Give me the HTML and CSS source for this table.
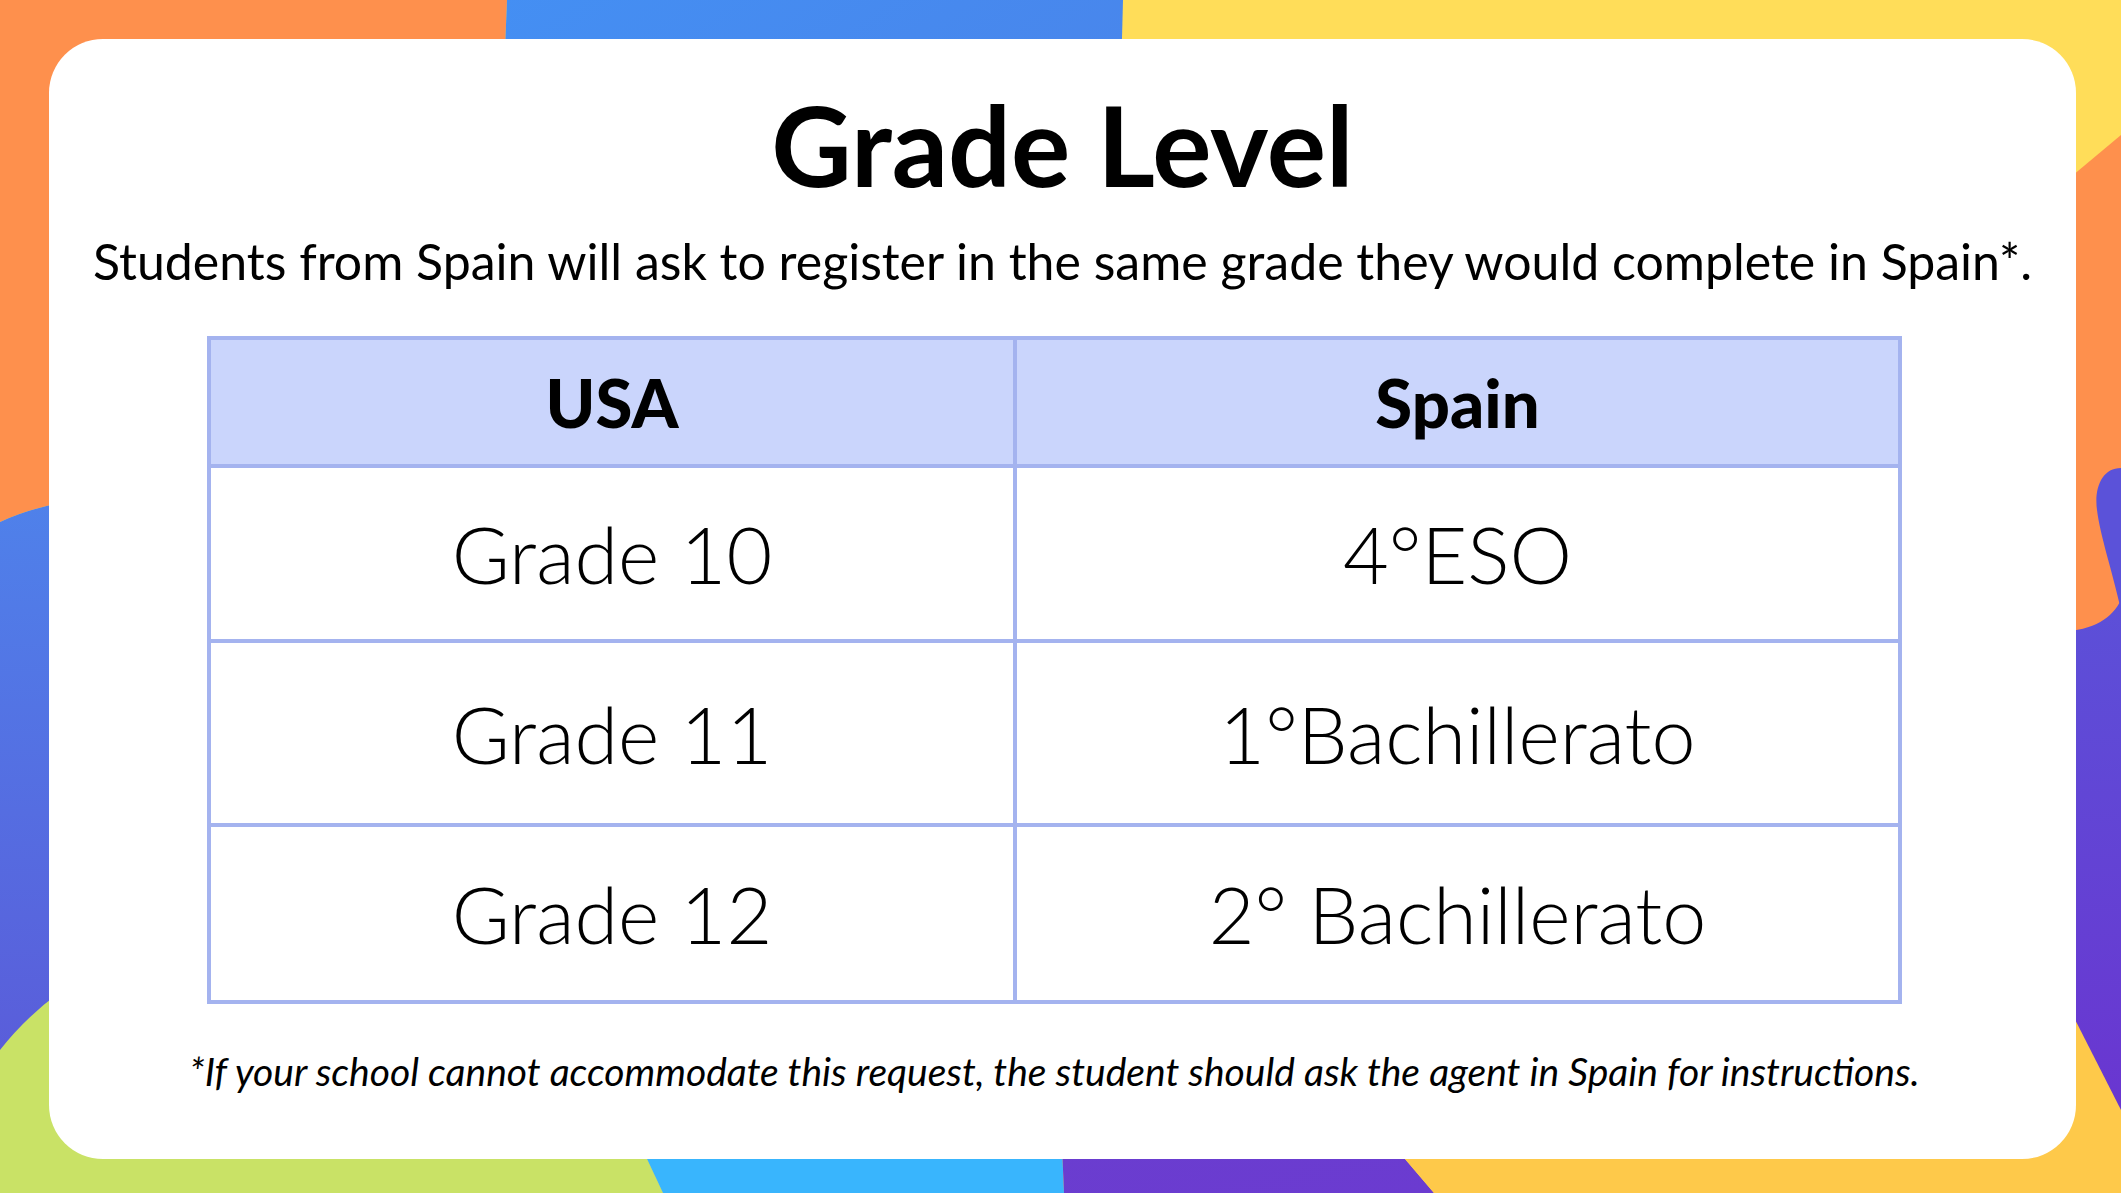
FILE: index.html
```html
<!DOCTYPE html>
<html lang="en">
<head>
<meta charset="utf-8">
<title>Grade Level</title>
<link rel="stylesheet" href="styles.css">
</head>
<body>
<svg class="backdrop" viewBox="0 0 2121 1193" preserveAspectRatio="none" aria-hidden="true">
  <defs>
    <linearGradient id="gTopBlue" x1="0" y1="0" x2="1" y2="1">
      <stop offset="0" stop-color="#448ff3"/>
      <stop offset="1" stop-color="#4c7fe6"/>
    </linearGradient>
    <linearGradient id="gLeft" x1="0" y1="0" x2="0" y2="1">
      <stop offset="0" stop-color="#4f81ea"/>
      <stop offset="1" stop-color="#5b59d8"/>
    </linearGradient>
    <linearGradient id="gRight" x1="0" y1="0" x2="0" y2="1">
      <stop offset="0" stop-color="#5c50d8"/>
      <stop offset="1" stop-color="#6a35d0"/>
    </linearGradient>
    <linearGradient id="gBottomPurple" x1="0" y1="0" x2="1" y2="1">
      <stop offset="0" stop-color="#6a3ecf"/>
      <stop offset="1" stop-color="#6b3bd0"/>
    </linearGradient>
  </defs>
  <rect x="0" y="0" width="2121" height="1193" fill="#ffdd59"/>
  <path d="M0,0 L507,0 L490,420 L60,503 Q25,510 0,522 Z" fill="#fe904d"/>
  <path d="M507,0 L1123,0 L1112,420 L490,420 Z" fill="url(#gTopBlue)"/>
  <path d="M0,522 Q25,510 60,503 L60,1120 L0,1120 Z" fill="url(#gLeft)"/>
  <path d="M0,1050 Q25,1018 60,992 L640,1100 L647,1159 L663,1193 L0,1193 Z" fill="#c9e266"/>
  <path d="M640,1100 L1060,1100 L1064,1193 L663,1193 L647,1159 Z" fill="#39b5fd"/>
  <path d="M1060,1100 L1390,1100 L1405,1159 L1434,1193 L1064,1193 Z" fill="url(#gBottomPurple)"/>
  <path d="M1390,1100 L2121,1100 L2121,1193 L1434,1193 L1405,1159 Z" fill="#fec94a"/>
  <path d="M2060,186 L2121,135 L2121,660 L2060,660 Z" fill="#fe904d"/>
  <path d="M2060,632 C2095,630 2112,618 2121,600 L2121,1125 L2060,1000 Z" fill="url(#gRight)"/>
  <path d="M2121,468 C2102,468 2094,488 2097,510 C2100,535 2112,570 2121,610 Z" fill="#5b52d9"/>
  <path d="M2060,990 L2121,1110 L2121,1193 L2060,1193 Z" fill="#fec94a"/>
</svg>

<main class="card">
  <h1 class="title">Grade Level</h1>
  <p class="subtitle">Students from Spain will ask to register in the same grade they would complete in Spain*.</p>
  <section class="compare">
    <div class="grade-table" role="table">
      <div class="cell head" role="columnheader">USA</div>
      <div class="cell head" role="columnheader">Spain</div>
      <div class="cell" role="cell">Grade 10</div>
      <div class="cell" role="cell">4°ESO</div>
      <div class="cell" role="cell">Grade 11</div>
      <div class="cell" role="cell">1°Bachillerato</div>
      <div class="cell" role="cell">Grade 12</div>
      <div class="cell" role="cell">2° Bachillerato</div>
    </div>
    <p class="note">*If your school cannot accommodate this request, the student should ask the agent in Spain for instructions.</p>
  </section>
</main>
</body>
</html>
```

FILE: styles.css
```css
html, body {
  margin: 0;
  padding: 0;
}

body {
  position: relative;
  width: 2121px;
  height: 1193px;
  box-sizing: border-box;
  padding: 39px 45px 34px 49px;
  overflow: hidden;
  font-family: "Lato", "Liberation Sans", sans-serif;
  color: #000;
  background: #ffdd59;
}

.backdrop {
  position: absolute;
  left: 0;
  top: 0;
  width: 2121px;
  height: 1193px;
  z-index: 0;
}

.card {
  position: relative;
  z-index: 1;
  height: 1120px;
  box-sizing: border-box;
  padding-top: 50px;
  background: #ffffff;
  border-radius: 54px;
}

.title {
  margin: 0;
  font-size: 111px;
  line-height: 111px;
  font-weight: 700;
  text-align: center;
}

.subtitle {
  margin: 36px 0 0;
  font-size: 50px;
  line-height: 50px;
  font-weight: 400;
  text-align: center;
  white-space: nowrap;
}

.compare {
  margin: 50px 0 0 158px;
  width: 1695px;
}

.grade-table {
  display: grid;
  grid-template-columns: 802px 881px;
  grid-template-rows: 124px 171px 180px 173px;
  gap: 4px;
  padding: 4px;
  background: #a4b3ef;
}

.cell {
  display: flex;
  align-items: center;
  justify-content: center;
  background: #ffffff;
  font-size: 79px;
  line-height: 79px;
  font-weight: 300;
}

.cell.head {
  background: #cad5fc;
  font-size: 67px;
  line-height: 67px;
  font-weight: 900;
}

.note {
  margin: 48px -60px 0;
  font-size: 39px;
  line-height: 39px;
  font-style: italic;
  text-align: center;
  white-space: nowrap;
}
```
